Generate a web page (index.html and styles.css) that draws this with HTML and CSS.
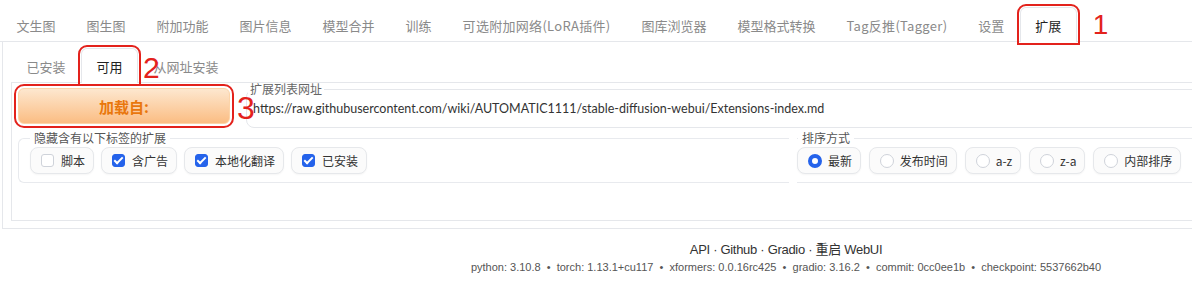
FILE: index.html
```html
<!DOCTYPE html>
<html lang="zh">
<head>
  <meta charset="UTF-8" />
  <title>扩展</title>
  <link rel="stylesheet" href="styles.css">
</head>
<body>
  <div class="app">
    <div class="tabs">
      <button class="tab">文生图</button>
      <button class="tab">图生图</button>
      <button class="tab">附加功能</button>
      <button class="tab">图片信息</button>
      <button class="tab">模型合并</button>
      <button class="tab">训练</button>
      <button class="tab latin">可选附加网络(LoRA插件)</button>
      <button class="tab">图库浏览器</button>
      <button class="tab">模型格式转换</button>
      <button class="tab latin">Tag反推(Tagger)</button>
      <button class="tab">设置</button>
      <button class="tab selected marked">扩展<span class="mark mark-1">1</span></button>
    </div>

    <div class="panel">
      <div class="subtabs">
        <button class="tab">已安装</button>
        <button class="tab selected marked">可用<span class="mark mark-2">2</span></button>
        <button class="tab">从网址安装</button>
      </div>

      <div class="subpanel">
        <div class="load-row">
          <button class="load-btn marked">加载自:<span class="mark mark-3">3</span></button>
          <fieldset class="textbox">
            <legend>扩展列表网址</legend>
            <input type="text" value="https://raw.githubusercontent.com/wiki/AUTOMATIC1111/stable-diffusion-webui/Extensions-index.md" />
          </fieldset>
        </div>

        <div class="filter-row">
          <fieldset class="group">
            <legend>隐藏含有以下标签的扩展</legend>
            <label class="pill"><span class="check"></span>脚本</label>
            <label class="pill"><span class="check on"></span>含广告</label>
            <label class="pill"><span class="check on"></span>本地化翻译</label>
            <label class="pill"><span class="check on"></span>已安装</label>
          </fieldset>
          <fieldset class="group sort">
            <legend>排序方式</legend>
            <label class="pill"><span class="radio on"></span>最新</label>
            <label class="pill"><span class="radio"></span>发布时间</label>
            <label class="pill"><span class="radio"></span>a-z</label>
            <label class="pill"><span class="radio"></span>z-a</label>
            <label class="pill"><span class="radio"></span>内部排序</label>
          </fieldset>
        </div>
      </div>
    </div>

    <footer class="footer">
      <div class="links">API · Github · Gradio · 重启 WebUI</div>
      <div class="versions">python: 3.10.8 &nbsp;•&nbsp; torch: 1.13.1+cu117 &nbsp;•&nbsp; xformers: 0.0.16rc425 &nbsp;•&nbsp; gradio: 3.16.2 &nbsp;•&nbsp; commit: 0cc0ee1b &nbsp;•&nbsp; checkpoint: 5537662b40</div>
    </footer>
  </div>
</body>
</html>
```

FILE: styles.css
```css
body {
  margin: 0;
  overflow: hidden;
  background: #fff;
  font-family: "Noto Sans CJK SC", "Noto Sans", sans-serif;
  color: #333;
}

.app {
  width: 1572px;
}

.tabs,
.subtabs {
  display: flex;
  align-items: flex-end;
  border-bottom: 1px solid #e5e7eb;
}

.tabs {
  padding: 7px 0 0 1px;
}

.subtabs {
  padding-top: 6px;
  margin-left: 8px;
}

.tab {
  height: 35px;
  padding: 0 14.5px;
  border: 1px solid transparent;
  border-bottom: none;
  border-radius: 6px 6px 0 0;
  background: none;
  font-family: inherit;
  font-size: 13px;
  color: #8a8a8a;
  margin-bottom: -1px;
}

.tab.latin {
  letter-spacing: 0.3px;
}

.tab.selected {
  background: #fff;
  border-color: #e5e7eb;
  color: #222;
}

.marked {
  position: relative;
  outline: 2px solid #e3221c;
  outline-offset: 1px;
}

.mark {
  position: absolute;
  color: #e3221c;
  font-family: "Liberation Sans", sans-serif;
  font-weight: normal;
  line-height: 1;
}

.mark-1 {
  left: 72px;
  top: 3px;
  font-size: 28px;
}

.mark-2 {
  left: 61px;
  top: 4px;
  font-size: 30px;
}

.mark-3 {
  left: 218px;
  top: 3px;
  font-size: 32px;
}

.panel {
  margin-left: 2px;
  border: 1px solid #e5e7eb;
  border-top: none;
  padding-bottom: 7px;
}

.subpanel {
  margin-left: 8px;
  border: 1px solid #e5e7eb;
  border-top: none;
  height: 137px;
}

.load-row {
  display: flex;
  align-items: flex-start;
  padding-left: 6px;
}

.load-btn {
  margin-top: 5px;
  width: 212px;
  height: 36px;
  border: 1px solid #fcd4a8;
  border-radius: 6px;
  background: linear-gradient(to bottom, #fde7cf, #fbbd83);
  color: #e9770d;
  font-family: inherit;
  font-size: 15px;
  font-weight: bold;
  outline-offset: 2px;
}

.textbox {
  flex: 1;
  margin: -1px 0 0 16px;
  padding: 0 6px 9px;
  border: 1px solid #e5e7eb;
  border-radius: 8px;
}

.textbox legend {
  font-size: 12px;
  line-height: 14px;
  color: #666;
  padding: 0 2px;
  margin-left: -5px;
}

.textbox input {
  display: block;
  border: none;
  outline: none;
  width: 100%;
  height: 20px;
  padding: 0;
  margin-top: 2px;
  font-family: "Lato", sans-serif;
  font-size: 12.5px;
  color: #333;
}

.filter-row {
  display: flex;
  gap: 8px;
  margin: 3px 0 0 6px;
}

.group {
  flex: none;
  width: 771px;
  box-sizing: border-box;
  display: flex;
  gap: 7px;
  margin: 0;
  padding: 2px 11px 8px;
  border: 1px solid #e8eaee;
  border-right: none;
  border-radius: 6px 0 0 6px;
}

.group legend {
  font-size: 12px;
  line-height: 14px;
  color: #555;
  padding: 0 4px;
}

.group.sort {
  flex: 1;
  width: auto;
  border-left: none;
  border-radius: 0;
  padding-left: 0;
}

.group.sort legend {
  margin-left: 1px;
}

.pill {
  display: flex;
  align-items: center;
  gap: 7px;
  height: 25px;
  padding: 0 8px 0 10px;
  border: 1px solid #e6e8eb;
  border-radius: 8px;
  background: #fbfbfb;
  box-shadow: 0 1px 2px rgba(0, 0, 0, 0.04);
  font-size: 12px;
  color: #333;
}

.sort .pill {
  gap: 6px;
  padding: 0 8px 0 10px;
}

.sort .pill + .pill {
  margin-left: 0.8px;
}

.check {
  width: 13px;
  height: 13px;
  border: 1px solid #cfd3da;
  border-radius: 3px;
  background: #fff;
  position: relative;
  box-sizing: border-box;
}

.check.on {
  background: #2563eb;
  border-color: #2563eb;
}

.check.on::after {
  content: "";
  position: absolute;
  left: 3px;
  top: 0;
  width: 3px;
  height: 7px;
  border: solid #fff;
  border-width: 0 2px 2px 0;
  transform: rotate(45deg);
}

.radio {
  width: 14px;
  height: 14px;
  border: 1px solid #cfd3da;
  border-radius: 50%;
  background: #fff;
  box-sizing: border-box;
}

.radio.on {
  border: 4px solid #2563eb;
}

.footer {
  text-align: center;
  padding-top: 10px;
  font-family: "Liberation Sans", "Noto Sans CJK SC", sans-serif;
}

.links {
  font-size: 13px;
  letter-spacing: -0.3px;
  color: #333;
}

.versions {
  margin-top: 3px;
  font-size: 11px;
  color: #555;
}
```
